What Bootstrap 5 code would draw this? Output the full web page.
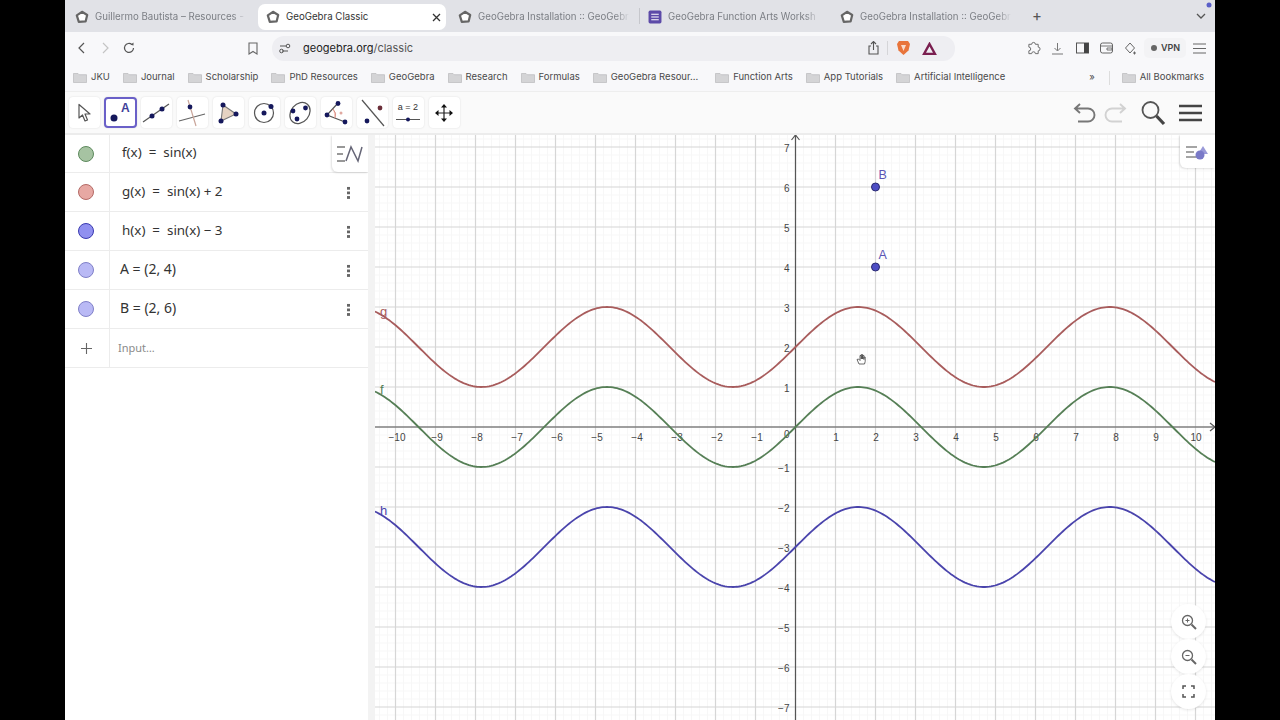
<!DOCTYPE html>
<html lang="en">
<head>
<meta charset="UTF-8">
<title>GeoGebra Classic</title>
<link href="https://cdn.jsdelivr.net/npm/bootstrap@5.3.0/dist/css/bootstrap.min.css" rel="stylesheet">
<style>
html, body { height: 720px; overflow: hidden; background: #000; }
body { font-family: Inter, "Liberation Sans", sans-serif; color: #333; }
svg { flex-shrink: 0; }
.screen { width: 1150px; height: 720px; margin-left: 65px; background: #fff; }

.tabstrip { height: 32px; background: #e1e2e7; padding-left: 1px; position: relative; }
.browsertab { width: 192px; height: 26px; margin-top: 4px; padding-left: 9px; font-size: 9.7px; color: #7b7e84; white-space: nowrap; }
.browsertab span { width: 152px; overflow: hidden; margin-left: 6px; -webkit-mask-image: linear-gradient(90deg, #000 90%, transparent); mask-image: linear-gradient(90deg, #000 90%, transparent); }
.browsertab.current { width: 188px; background: #fff; color: #333; border-radius: 7px; padding-left: 8px; }
.browsertab.current span { width: 146px; -webkit-mask-image: none; mask-image: none; }
.browsertab.third { width: 193px; padding-left: 12px; }
.browsertab.fourth { width: 191px; padding-left: 8px; }
.browsertab.fifth { width: 191px; }
.tabsep { width: 1px; height: 16px; background: #c6c7cc; margin-top: 8px; }
.newtab { font-size: 15px; color: #555; margin: 6px 0 0 10px; line-height: 20px; }
.tabchevron { position: absolute; left: 1131px; top: 13px; }
.tabdot { position: absolute; left: 1141px; top: 2px; }

.urlbar { height: 31px; padding-top: 1px; background: #f8f8fa; }
.urlpill { width: 683px; height: 25px; margin-left: 14px; background: #eeeef2; border-radius: 12px; font-size: 11px; color: #555; padding-left: 7px; }
.urltext { margin-left: 12px; }
.urltext b { font-weight: 400; color: #222; }
.ic-back { margin-left: 12px; }
.ic-forward { margin-left: 13px; }
.ic-reload { margin-left: 12px; }
.ic-bookmark { margin-left: 112px; }
.pillsep { width: 1px; height: 14px; background: #d5d5d8; margin-left: 8px; }
.ic-brave { margin-left: 8px; }
.ic-bat { margin-left: 11px; margin-right: 18px; }
.ic-ext { margin-left: 72px; }
.ic-down { margin-left: 10px; }
.ic-side { margin-left: 12px; }
.ic-wallet { margin-left: 11px; }
.ic-leo { margin-left: 11px; }
.vpnpill { margin-left: 7px; font-size: 9px; font-weight: 600; color: #444; gap: 3px; background: #f3f3f5; border-radius: 5px; padding: 3px 6px 3px 6px; }
.ic-menu { margin-left: 7px; }

.bookmarks { height: 29px; padding-top: 1px; background: #f8f8fa; font-size: 9.5px; color: #4a4a4a; padding-left: 8px; white-space: nowrap; border-bottom: 1px solid #eee; }
.bookmarks .mark-item { margin-right: 13px; gap: 4px; }
.bookmarks .mark-item.wider { margin-right: 17px; }
.bookmarks .mark-item.last { margin-right: 11px; }
.morebooks { margin-right: 14px; }
.booksep { width: 1px; height: 14px; background: #ddd; margin-right: 12px; }

.ggbbar { height: 43px; background: #fafafa; padding-left: 1px; border-bottom: 2px solid #ececec; }
.toolbtn { width: 31px; height: 31px; margin: 0 2.5px; background: #fff; border-radius: 4px; box-shadow: 0 0 2px rgba(0,0,0,.12); }
.toolbtn.active { width: 33px; margin: 0 1.5px; border: 2px solid #6a60c8; }
.assign { font: 9px/10px "Liberation Sans", sans-serif; color: #333; }
.ggbright { margin-right: 13px; }
.ic-redo { margin-left: 6px; }
.ic-search { margin-left: 13px; }
.ic-burger { margin-left: 13px; }

.workarea { height: 585px; }
.algebra { width: 303px; background: #fff; position: relative; }
.algrow { height: 39px; border-bottom: 1.5px solid #ececec; font-family: "Noto Sans", sans-serif; font-size: 13.4px; color: #333; }
.algrow.first { height: 38px; }
.algrow.pointrow { font-size: 14px; }
.marble-cell { width: 45px; height: 100%; padding-right: 2px; border-right: 1.5px solid #ececec; }
.marble { width: 16px; height: 16px; border-radius: 50%; border: 1px solid; }
.marble.col-f { background: #a6c3a2; border-color: #5d8a5d; }
.marble.col-g { background: #e7a8a3; border-color: #b46a66; }
.marble.col-h { background: #9090f0; border-color: #3a3ab0; }
.marble.col-p { background: #b9b9f5; border-color: #8080c8; }
.algtext { padding-left: 12px; padding-bottom: 2px; flex-grow: 1; }
.pointrow .algtext { padding-left: 10px; padding-bottom: 4px; }
.kebab { width: 3px; height: 13px; margin-right: 18px; background: radial-gradient(circle, #666 1.4px, transparent 1.6px) 0 0 / 3px 4.6px; }
.inputhint { color: #8a8a8a; font-size: 11px; padding-left: 8px; }
.panelsplit { width: 7px; background: #f3f3f3; }
.stylebtn { position: absolute; top: 0; right: 0; width: 36px; height: 37px; background: #fff; border-radius: 0 0 0 6px; box-shadow: -1px 1px 2px rgba(0,0,0,.12); }
.graphview { width: 840px; position: relative; background: #fff; overflow: hidden; }
.graphview svg.plot { display: block; }
.graphstyle { position: absolute; top: 0; right: 0; width: 35px; height: 33px; background: #fff; border-radius: 0 0 0 6px; box-shadow: -1px 1px 2px rgba(0,0,0,.12); }
.zoombtn { position: absolute; left: 796px; width: 35px; height: 35px; background: #fff; border-radius: 50%; box-shadow: 0 1px 3px rgba(0,0,0,.1); }
.zoombtn.zoom-in { top: 469px; }
.zoombtn.zoom-out { top: 504px; }
.zoombtn.zoom-fit { top: 539px; }
.handcursor { position: absolute; left: 481px; top: 218px; }
</style>
</head>
<body>
<svg width="0" height="0" class="position-absolute">
  <symbol id="ggb" viewBox="0 0 14 14"><path d="M7 1.800 12.200 5 10.600 11.400 3.800 11.800 1.800 5.400Z" fill="#fff" stroke="#666" stroke-width="2.200" stroke-linejoin="round"/></symbol>
  <symbol id="folder" viewBox="0 0 14 11"><path d="M.5 1.500h4.500l1.200 1.200h7.300v7.800H.5Z" fill="#d4d4d6" stroke="#b9b9bb" stroke-width=".7"/></symbol>
</svg>

<div class="screen d-flex flex-column">
  <!-- tabs -->
  <div class="tabstrip d-flex align-items-start">
    <div class="browsertab d-flex align-items-center"><svg width="14" height="14"><use href="#ggb"/></svg><span>Guillermo Bautista – Resources -</span></div>
    <div class="browsertab current d-flex align-items-center"><svg width="14" height="14"><use href="#ggb"/></svg><span>GeoGebra Classic</span>
      <svg width="9" height="9" viewBox="0 0 9 9"><path d="M1 1l7 7M8 1 1 8" stroke="#333" stroke-width="1.300"/></svg></div>
    <div class="browsertab third d-flex align-items-center"><svg width="14" height="14"><use href="#ggb"/></svg><span>GeoGebra Installation :: GeoGebr</span></div>
    <div class="tabsep"></div>
    <div class="browsertab fourth d-flex align-items-center"><svg width="14" height="14" viewBox="0 0 13 13"><rect x=".5" y=".5" width="12" height="12" rx="1.500" fill="#5c4aa8"/><path d="M3 4h7M3 6.500h7M3 9h7" stroke="#fff" stroke-width="1"/></svg><span>GeoGebra Function Arts Worksh</span></div>
    <div class="browsertab fifth d-flex align-items-center"><svg width="14" height="14"><use href="#ggb"/></svg><span>GeoGebra Installation :: GeoGebr</span></div>
    <div class="newtab">+</div>
    <svg class="tabchevron" width="10" height="7" viewBox="0 0 10 7"><path d="M1 1l4 4 4-4" fill="none" stroke="#555" stroke-width="1.300"/></svg>
    <svg class="tabdot" width="6" height="6"><circle cx="3" cy="3" r="2.500" fill="#5a5fc8"/></svg>
  </div>

  <!-- address row -->
  <div class="urlbar d-flex align-items-center">
    <svg class="ic-back" width="10" height="12" viewBox="0 0 10 12"><path d="M7 1 2 6l5 5" fill="none" stroke="#555" stroke-width="1.200"/></svg>
    <svg class="ic-forward" width="10" height="12" viewBox="0 0 10 12"><path d="M3 1l5 5-5 5" fill="none" stroke="#c4c4c4" stroke-width="1.200"/></svg>
    <svg class="ic-reload" width="14" height="14" viewBox="0 0 14 14"><path d="M11.500 7A4.500 4.500 0 1 1 10 3.600" fill="none" stroke="#555" stroke-width="1.200"/><path d="M8.500 3.800 11.500 4.500 11.500 1.500Z" fill="#555"/></svg>
    <svg class="ic-bookmark" width="10" height="13" viewBox="0 0 10 13"><path d="M1 1h8v11L5 9.500 1 12Z" fill="none" stroke="#666" stroke-width="1.100"/></svg>
    <div class="urlpill d-flex align-items-center">
      <svg width="12" height="11" viewBox="0 0 12 11"><path d="M1 3h6M9 8H3" stroke="#555" stroke-width="1"/><circle cx="9" cy="3" r="1.800" fill="none" stroke="#555"/><circle cx="2.500" cy="8" r="1.800" fill="none" stroke="#555"/></svg>
      <div class="urltext"><b>geogebra.org</b>/classic</div>
      <svg class="ms-auto" width="11" height="14" viewBox="0 0 11 14"><path d="M3 5H1v8h9V5H8M5.500 9V1M3 3l2.500-2.500L8 3" fill="none" stroke="#555" stroke-width="1.100"/></svg>
      <div class="pillsep"></div>
      <svg class="ic-brave" width="15" height="16" viewBox="0 0 15 16"><path d="M3 1h9l2 3-1.500 6.500L7.500 15 2.500 10.500 1 4Z" fill="#e8743b"/><path d="M5 5h5L7.500 11Z" fill="#fff" opacity=".75"/></svg>
      <svg class="ic-bat" width="15" height="13" viewBox="0 0 15 13"><path d="M7.500 2 13 12H2Z" fill="none" stroke="#7a1f50" stroke-width="2.400"/></svg>
    </div>
    <svg class="ic-ext" width="14" height="15" viewBox="0 0 15 15"><path d="M5 3a2 2 0 0 1 4 0H12V6a2 2 0 0 1 0 4V13H9a2 2 0 0 0-4 0H2V10a2 2 0 0 0 0-4V3Z" fill="none" stroke="#666" stroke-width="1"/></svg>
    <svg class="ic-down" width="13" height="13" viewBox="0 0 13 13"><path d="M6.500 1v7.500M3.500 6l3 3 3-3M1 12h11" fill="none" stroke="#777" stroke-width="1"/></svg>
    <svg class="ic-side" width="13" height="12" viewBox="0 0 13 12"><rect x=".5" y="1" width="12" height="10" fill="none" stroke="#555"/><rect x="8" y="1" width="4.500" height="10" fill="#444"/></svg>
    <svg class="ic-wallet" width="13" height="12" viewBox="0 0 13 12"><rect x=".5" y="1" width="12" height="10" rx="2" fill="none" stroke="#666"/><path d="M1 4h11M7 8h5V6H7Z" fill="none" stroke="#666" stroke-width=".9"/></svg>
    <svg class="ic-leo" width="13" height="13" viewBox="0 0 13 13"><path d="M6 1 10.500 6 6 11 1.500 6Z" fill="none" stroke="#666"/><path d="M10.500 9.500v3M9 11h3" stroke="#666"/></svg>
    <div class="vpnpill d-flex align-items-center"><svg width="8" height="8"><circle cx="4" cy="4" r="3" fill="#666"/></svg>VPN</div>
    <svg class="ic-menu" width="13" height="11" viewBox="0 0 13 11"><path d="M0 1h13M0 5.500h13M0 10h13" stroke="#666" stroke-width="1"/></svg>
  </div>

  <!-- bookmarks -->
  <div class="bookmarks d-flex align-items-center">
    <div class="mark-item d-flex align-items-center"><svg width="14" height="11"><use href="#folder"/></svg>JKU</div>
    <div class="mark-item d-flex align-items-center"><svg width="14" height="11"><use href="#folder"/></svg>Journal</div>
    <div class="mark-item d-flex align-items-center"><svg width="14" height="11"><use href="#folder"/></svg>Scholarship</div>
    <div class="mark-item d-flex align-items-center"><svg width="14" height="11"><use href="#folder"/></svg>PhD Resources</div>
    <div class="mark-item d-flex align-items-center"><svg width="14" height="11"><use href="#folder"/></svg>GeoGebra</div>
    <div class="mark-item d-flex align-items-center"><svg width="14" height="11"><use href="#folder"/></svg>Research</div>
    <div class="mark-item d-flex align-items-center"><svg width="14" height="11"><use href="#folder"/></svg>Formulas</div>
    <div class="mark-item wider d-flex align-items-center"><svg width="14" height="11"><use href="#folder"/></svg>GeoGebra Resour...</div>
    <div class="mark-item d-flex align-items-center"><svg width="14" height="11"><use href="#folder"/></svg>Function Arts</div>
    <div class="mark-item d-flex align-items-center"><svg width="14" height="11"><use href="#folder"/></svg>App Tutorials</div>
    <div class="mark-item d-flex align-items-center"><svg width="14" height="11"><use href="#folder"/></svg>Artificial Intelligence</div>
    <div class="morebooks ms-auto">»</div>
    <div class="booksep"></div>
    <div class="mark-item last d-flex align-items-center"><svg width="14" height="11"><use href="#folder"/></svg>All Bookmarks</div>
  </div>

  <!-- geogebra toolbar -->
  <div class="ggbbar d-flex align-items-center">
    <div class="toolbtn d-flex align-items-center justify-content-center"><svg width="14" height="20" viewBox="0 0 14 20"><path d="M2 1.500V15l3.500-3 2.500 6 2.500-1-2.500-6H13Z" fill="#fff" stroke="#555" stroke-width="1.200" stroke-linejoin="round"/></svg></div>
    <div class="toolbtn active d-flex align-items-center justify-content-center"><svg width="26" height="24" viewBox="0 0 26 24"><circle cx="7" cy="17" r="3.500" fill="#15185c"/><text x="14" y="11" font-family="Liberation Sans" font-size="12" font-weight="bold" fill="#3f3f9a">A</text></svg></div>
    <div class="toolbtn d-flex align-items-center justify-content-center"><svg width="28" height="22" viewBox="0 0 28 22"><path d="M1 20 27 2" stroke="#555" stroke-width="1.200"/><circle cx="10" cy="14" r="2.500" fill="#15185c"/><circle cx="20" cy="7" r="2.500" fill="#15185c"/></svg></div>
    <div class="toolbtn d-flex align-items-center justify-content-center"><svg width="28" height="28" viewBox="0 0 28 28"><path d="M1 22 27 15" stroke="#666" stroke-width="1.200"/><path d="M10 1 18 27" stroke="#c9a59a" stroke-width="1.200"/><circle cx="12" cy="8" r="2.400" fill="#15185c"/></svg></div>
    <div class="toolbtn d-flex align-items-center justify-content-center"><svg width="22" height="22" viewBox="0 0 22 22"><path d="M6 3 19 12 4 19Z" fill="#e6d3c2" stroke="#777" stroke-width="1.100"/><circle cx="6" cy="3" r="2.500" fill="#15185c"/><circle cx="19" cy="12" r="2.500" fill="#15185c"/><circle cx="4" cy="19" r="2.500" fill="#15185c"/></svg></div>
    <div class="toolbtn d-flex align-items-center justify-content-center"><svg width="24" height="24" viewBox="0 0 24 24"><circle cx="12" cy="12" r="9.500" fill="none" stroke="#555" stroke-width="1.200"/><circle cx="12" cy="12" r="2.500" fill="#15185c"/><circle cx="19" cy="5.500" r="2.500" fill="#15185c"/></svg></div>
    <div class="toolbtn d-flex align-items-center justify-content-center"><svg width="26" height="26" viewBox="0 0 26 26"><ellipse cx="13" cy="13" rx="9" ry="11.500" transform="rotate(40 13 13)" fill="none" stroke="#555" stroke-width="1.200"/><circle cx="6" cy="11" r="2.400" fill="#15185c"/><circle cx="10" cy="19" r="2.400" fill="#15185c"/><circle cx="18.500" cy="8" r="2.400" fill="#15185c"/></svg></div>
    <div class="toolbtn d-flex align-items-center justify-content-center"><svg width="26" height="26" viewBox="0 0 26 26"><path d="M15 3 4 15 22 22" fill="none" stroke="#555" stroke-width="1.200"/><path d="M10 9Q14 13 12 18" fill="#f3c9c0" stroke="#d98a80"/><circle cx="15" cy="3.500" r="2.400" fill="#15185c"/><circle cx="4" cy="15" r="2.400" fill="#15185c"/><circle cx="22" cy="22" r="2.400" fill="#15185c"/><circle cx="18" cy="13" r="1.500" fill="#e0a8a0"/></svg></div>
    <div class="toolbtn d-flex align-items-center justify-content-center"><svg width="26" height="28" viewBox="0 0 26 28"><path d="M3 1 25 27" stroke="#555" stroke-width="1.200"/><circle cx="21" cy="9" r="2.400" fill="#6b2f3a"/><circle cx="8" cy="22" r="2.400" fill="#15185c"/></svg></div>
    <div class="toolbtn d-flex flex-column align-items-center justify-content-center"><div class="assign">a = 2</div><svg class="mt-1" width="24" height="7" viewBox="0 0 24 7"><path d="M0 3.500h24" stroke="#555"/><circle cx="12" cy="3.500" r="2" fill="#15185c"/></svg></div>
    <div class="toolbtn d-flex align-items-center justify-content-center"><svg width="18" height="18" viewBox="0 0 18 18"><path d="M9 2v14M2 9h14" stroke="#222" stroke-width="1.200"/><path d="M9 0l3 3.500H6ZM9 18l3-3.500H6ZM0 9l3.500-3v6ZM18 9l-3.500-3v6Z" fill="#111"/></svg></div>
    <div class="ggbright ms-auto d-flex align-items-center">
      <svg width="24" height="22" viewBox="0 0 24 22"><path d="M7 2 2 6.500 7 11M2 6.500h13a6 6 0 0 1 0 13H5" fill="none" stroke="#777" stroke-width="1.900"/></svg>
      <svg class="ic-redo" width="24" height="22" viewBox="0 0 24 22"><path d="M17 2l5 4.500L17 11M22 6.500H9a6 6 0 0 0 0 13h10" fill="none" stroke="#d2d2d2" stroke-width="1.900"/></svg>
      <svg class="ic-search" width="26" height="26" viewBox="0 0 26 26"><circle cx="10.500" cy="10" r="8" fill="none" stroke="#555" stroke-width="1.800"/><path d="M16.500 16 24 24" stroke="#444" stroke-width="3.200"/></svg>
      <svg class="ic-burger" width="23" height="18" viewBox="0 0 23 18"><path d="M0 2h23M0 9h23M0 16h23" stroke="#444" stroke-width="2.300"/></svg>
    </div>
  </div>

  <!-- algebra + graphics -->
  <div class="workarea d-flex">
    <div class="algebra">
      <div class="algrow first d-flex align-items-center"><div class="marble-cell d-flex align-items-center justify-content-center"><div class="marble col-f"></div></div><div class="algtext">f(x)&nbsp; =&nbsp; sin(x)</div></div>
      <div class="algrow d-flex align-items-center"><div class="marble-cell d-flex align-items-center justify-content-center"><div class="marble col-g"></div></div><div class="algtext">g(x)&nbsp; =&nbsp; sin(x) + 2</div><div class="kebab"></div></div>
      <div class="algrow d-flex align-items-center"><div class="marble-cell d-flex align-items-center justify-content-center"><div class="marble col-h"></div></div><div class="algtext">h(x)&nbsp; =&nbsp; sin(x) − 3</div><div class="kebab"></div></div>
      <div class="algrow pointrow d-flex align-items-center"><div class="marble-cell d-flex align-items-center justify-content-center"><div class="marble col-p"></div></div><div class="algtext">A = (2, 4)</div><div class="kebab"></div></div>
      <div class="algrow pointrow d-flex align-items-center"><div class="marble-cell d-flex align-items-center justify-content-center"><div class="marble col-p"></div></div><div class="algtext">B = (2, 6)</div><div class="kebab"></div></div>
      <div class="algrow d-flex align-items-center"><div class="marble-cell d-flex align-items-center justify-content-center"><svg width="13" height="13" viewBox="0 0 13 13"><path d="M6.500 1v11M1 6.500h11" stroke="#666" stroke-width="1.100"/></svg></div><div class="inputhint">Input…</div></div>
      <div class="stylebtn d-flex align-items-center justify-content-center"><svg width="26" height="18" viewBox="0 0 26 18"><path d="M0 2h8M0 9h6M0 16h8" stroke="#777" stroke-width="1.400"/><path d="M9 16 14 2 21 16 25 2" fill="none" stroke="#667" stroke-width="1.500"/></svg></div>
    </div>
    <div class="panelsplit"></div>
    <div class="graphview">
      <svg class="plot" id="plot" width="840" height="585" viewBox="0 0 840 585"></svg>
      <div class="graphstyle d-flex align-items-center justify-content-center"><svg width="24" height="18" viewBox="0 0 24 18"><path d="M0 4h11M0 9h8M0 14h11" stroke="#888" stroke-width="1.400"/><path d="M12 11 17 3 22 11Z" fill="#9a9ad8"/><circle cx="14" cy="12" r="4.500" fill="#7a7ac8"/></svg></div>
      <svg class="handcursor" width="12" height="13" viewBox="0 0 12 13"><path d="M3 11 1 6.500l1.500-.5L4 7.500V2.500h1.300V6V1.500h1.300V6V2.500h1.300V6.500V4h1.300v4.500L8.500 11Z" fill="#fff" stroke="#444" stroke-width=".8" stroke-linejoin="round"/></svg>
      <div class="zoombtn zoom-in d-flex align-items-center justify-content-center"><svg width="16" height="16" viewBox="0 0 16 16"><circle cx="6.500" cy="6.500" r="5" fill="none" stroke="#666" stroke-width="1.300"/><path d="M10.500 10.500 15 15" stroke="#666" stroke-width="2"/><path d="M4.500 6.500h4M6.500 4.500v4" stroke="#666"/></svg></div>
      <div class="zoombtn zoom-out d-flex align-items-center justify-content-center"><svg width="16" height="16" viewBox="0 0 16 16"><circle cx="6.500" cy="6.500" r="5" fill="none" stroke="#666" stroke-width="1.300"/><path d="M10.500 10.500 15 15" stroke="#666" stroke-width="2"/><path d="M4.500 6.500h4" stroke="#666"/></svg></div>
      <div class="zoombtn zoom-fit d-flex align-items-center justify-content-center"><svg width="13" height="13" viewBox="0 0 13 13"><path d="M1 4V1h3M9 1h3v3M12 9v3H9M4 12H1V9" fill="none" stroke="#555" stroke-width="1.500"/></svg></div>
    </div>
  </div>
</div>

<script>
// graph drawn from the same numbers GeoGebra shows: origin and 40px per unit
const ox = 420.5, oy = 292, unit = 40;
const W = 840, H = 585;
let out = '';
const ln = (x1, y1, x2, y2, c, w) => `<line x1="${x1}" y1="${y1}" x2="${x2}" y2="${y2}" stroke="${c}" stroke-width="${w}"/>`;

// minor grid
for (let i = -60; i <= 60; i++) {
  if (i % 5 === 0) continue;
  out += ln(ox + i * 8, 0, ox + i * 8, H, '#f7f7f7', 1);
  out += ln(0, oy + i * 8, W, oy + i * 8, '#f7f7f7', 1);
}
// major grid
for (let i = -11; i <= 11; i++) {
  out += ln(ox + i * unit, 0, ox + i * unit, H, '#d6d6d6', 1.2);
  if (i >= -8 && i <= 8) out += ln(0, oy + i * unit, W, oy + i * unit, '#d6d6d6', 1.2);
}
// axes
out += ln(0, oy, W, oy, '#555', 1.2) + ln(ox, 0, ox, H, '#555', 1.2);
out += `<path d="M${ox - 4} 5 ${ox} 0 ${ox + 4} 5" fill="none" stroke="#555" stroke-width="1.200"/>`;
out += `<path d="M${W - 5} ${oy - 4} ${W} ${oy} ${W - 5} ${oy + 4}" fill="none" stroke="#555" stroke-width="1.200"/>`;

// axis numbers
const label = (x, y, t, anchor) => `<text x="${x}" y="${y}" text-anchor="${anchor}" font-family="Liberation Sans, sans-serif" font-size="10" fill="#444">${t}</text>`;
for (let i = -10; i <= 10; i++) {
  if (i === 0) continue;
  out += label(ox + i * unit + (i < 0 ? 1.5 : 0.5), oy + 14, i < 0 ? '−' + (-i) : i, 'middle');
}
for (let i = -7; i <= 7; i++) {
  if (i === 0) continue;
  out += label(ox - 6, oy - i * unit + 5, i < 0 ? '−' + (-i) : i, 'end');
}
out += label(ox - 6, oy + 11, '0', 'end');

// curves
function curve(shift, colour) {
  let d = '';
  for (let px = 0; px <= W; px += 2) {
    const y = oy - (Math.sin((px - ox) / unit) + shift) * unit;
    d += (px ? 'L' : 'M') + px + ' ' + y.toFixed(2);
  }
  return `<path d="${d}" fill="none" stroke="${colour}" stroke-width="1.800"/>`;
}
out += curve(0, '#567f56') + curve(2, '#a85c5c') + curve(-3, '#4a44ac');

const nameLabel = (x, y, t, c, fs) => `<text x="${x}" y="${y}" font-family="Liberation Sans, sans-serif" font-size="${fs}" fill="${c}">${t}</text>`;
out += nameLabel(5, 181, 'g', '#a85c5c', 13) + nameLabel(5, 259, 'f', '#567f56', 13) + nameLabel(5, 380, 'h', '#4a44ac', 13);

// points
[[2, 4, 'A'], [2, 6, 'B']].forEach(([x, y, n]) => {
  const px = ox + x * unit, py = oy - y * unit;
  out += `<circle cx="${px}" cy="${py}" r="4" fill="#4d4dc4" stroke="#2a2a70" stroke-width="1"/>`;
  out += nameLabel(px + 3, py - 8, n, '#5a54b4', 12.5);
});
document.getElementById('plot').innerHTML = out;
</script>
<script src="https://cdn.jsdelivr.net/npm/bootstrap@5.3.0/dist/js/bootstrap.bundle.min.js"></script>
</body>
</html>
